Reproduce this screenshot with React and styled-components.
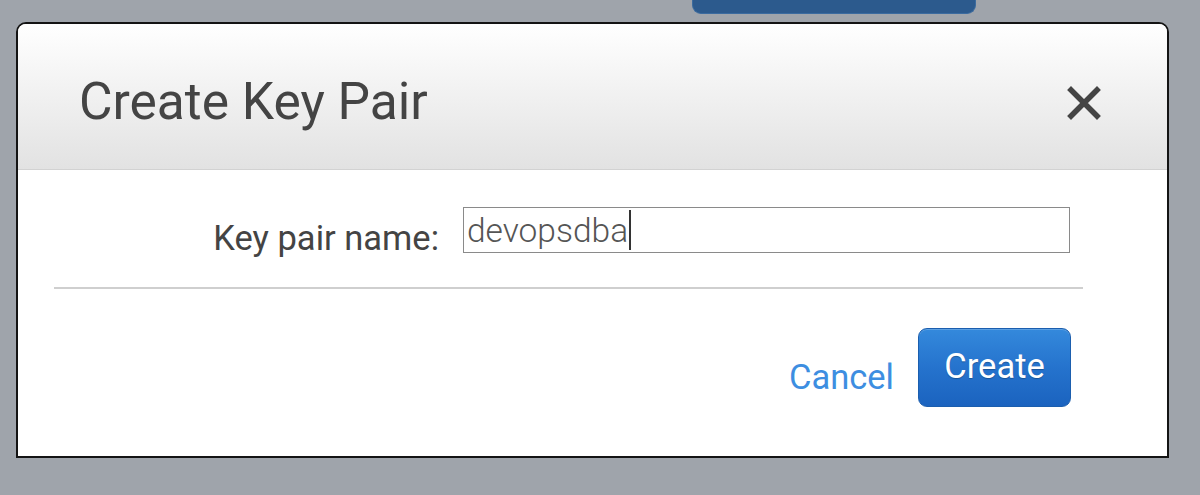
import React from "react"
import styled, { createGlobalStyle } from "styled-components"

const GlobalStyle = createGlobalStyle`
  html, body {
    margin: 0;
    padding: 0;
    background: #9fa4ab;
    font-family: Roboto, "Liberation Sans", sans-serif;
  }
`

const Backdrop = styled.div`
  width: 1200px;
  height: 495px;
  overflow: hidden;
  display: flex;
  flex-direction: column;
  background: #9fa4ab;
`

const PageButton = styled.div`
  margin-left: 692px;
  width: 284px;
  height: 14px;
  box-sizing: border-box;
  background: #2c5a8d;
  border: 1px solid #3b6b9f;
  border-top: none;
  border-radius: 0 0 9px 9px;
`

const Modal = styled.div`
  margin: 8px 0 0 16px;
  width: 1153px;
  box-sizing: border-box;
  border: 2px solid #141414;
  border-radius: 10px 10px 0 0;
  background: #fff;
  overflow: hidden;
`

const Header = styled.div`
  height: 146px;
  box-sizing: border-box;
  display: flex;
  align-items: center;
  justify-content: space-between;
  padding: 10px 66px 0 61px;
  background: linear-gradient(to bottom, #ffffff 0%, #f2f2f2 45%, #e2e2e2 100%);
  border-bottom: 1px solid #d2d2d2;
`

const Title = styled.h1`
  margin: 0;
  font-size: 51.5px;
  font-weight: 400;
  color: #444;
`

const CloseButton = styled.button`
  border: none;
  background: none;
  padding: 0;
  margin-top: 2px;
  width: 34px;
  height: 34px;
  display: flex;
  align-items: center;
  justify-content: center;
  cursor: pointer;
`

const Body = styled.div`
  padding: 37px 0 0;
`

const FormRow = styled.div`
  display: grid;
  grid-template-columns: 421px 607px;
  column-gap: 24px;
  align-items: end;
  padding-bottom: 34px;
`

const Label = styled.label`
  text-align: right;
  font-size: 34.5px;
  color: #444;
  line-height: 1;
  margin-bottom: -2px;
`

const TextField = styled.div`
  height: 46px;
  box-sizing: border-box;
  border: 1.5px solid #8a8a8a;
  display: flex;
  align-items: center;
  padding: 0 3px;
  font-size: 33.5px;
  font-weight: 300;
  color: #555;
`

const Caret = styled.span`
  display: inline-block;
  width: 2px;
  height: 40px;
  margin-left: 1px;
  background: #333;
`

const Divider = styled.hr`
  margin: 0 84px 0 36px;
  border: none;
  height: 2px;
  background: #cfcfcf;
`

const Footer = styled.div`
  display: flex;
  justify-content: flex-end;
  align-items: center;
  gap: 24px;
  padding: 39px 96px 49px 0;
`

const LinkButton = styled.button`
  border: none;
  background: none;
  padding: 0;
  margin-top: 18px;
  font-family: inherit;
  font-size: 34.5px;
  color: #3d8ee1;
  cursor: pointer;
`

const PrimaryButton = styled.button`
  width: 153px;
  height: 79px;
  box-sizing: border-box;
  border: 1px solid #1b5eae;
  border-radius: 9px;
  background: linear-gradient(to bottom, #3489dc 0%, #2573cd 50%, #1b63bf 100%);
  box-shadow: inset 0 1px 0 rgba(255, 255, 255, 0.2);
  color: #fff;
  font-family: inherit;
  font-size: 34.5px;
  padding: 0 0 3px;
  text-shadow: 0 1px 1px rgba(0, 0, 0, 0.25);
  cursor: pointer;
`

const CloseIcon = () => (
  <svg width="34" height="34" viewBox="0 0 34 34">
    <path
      d="M4 4 L30 30 M30 4 L4 30"
      stroke="#444"
      strokeWidth="5.5"
      strokeLinecap="square"
    />
  </svg>
)

const App = () => (
  <>
    <GlobalStyle />
    <Backdrop>
      <PageButton />
      <Modal>
        <Header>
          <Title>Create Key Pair</Title>
          <CloseButton aria-label="Close">
            <CloseIcon />
          </CloseButton>
        </Header>
        <Body>
          <FormRow>
            <Label>Key pair name:</Label>
            <TextField>
              devopsdba
              <Caret />
            </TextField>
          </FormRow>
          <Divider />
          <Footer>
            <LinkButton>Cancel</LinkButton>
            <PrimaryButton>Create</PrimaryButton>
          </Footer>
        </Body>
      </Modal>
    </Backdrop>
  </>
)

export default App
